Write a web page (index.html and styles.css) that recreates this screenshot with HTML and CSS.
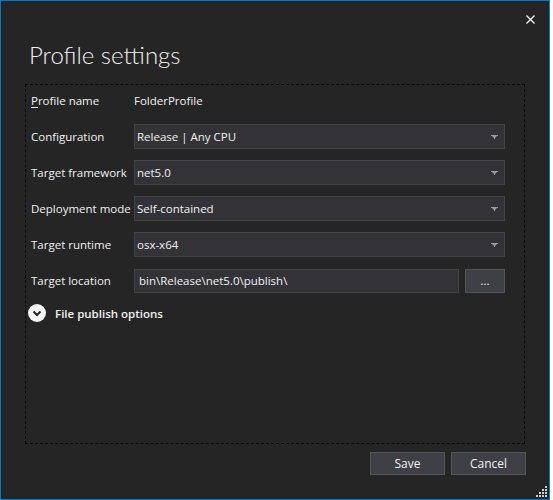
FILE: index.html
```html
<!DOCTYPE html>
<html lang="en">
<head>
  <meta charset="UTF-8" />
  <title>Profile settings</title>
  <link rel="stylesheet" href="styles.css">
</head>
<body>
  <div class="window">
    <div class="titlebar">
      <button class="close" aria-label="Close">
        <svg width="9" height="9" viewBox="0 0 9 9"><path d="M0.5 0.5L8.5 8.5M8.5 0.5L0.5 8.5" stroke="#f1f1f1" stroke-width="1.4"/></svg>
      </button>
    </div>

    <h1 class="title">Profile settings</h1>

    <div class="panel">
      <div class="form">
        <label><u>P</u>rofile name</label>
        <div class="value">FolderProfile</div>

        <label>Configuration</label>
        <div class="combo"><span>Release | Any CPU</span><svg class="arrow" width="7" height="4" viewBox="0 0 7 4"><path d="M0 0H7V1H6L4 3V4H3V3L1 1H0Z" fill="#9a9a9a"/></svg></div>

        <label>Target framework</label>
        <div class="combo"><span>net5.0</span><svg class="arrow" width="7" height="4" viewBox="0 0 7 4"><path d="M0 0H7V1H6L4 3V4H3V3L1 1H0Z" fill="#9a9a9a"/></svg></div>

        <label>Deployment mode</label>
        <div class="combo"><span>Self-contained</span><svg class="arrow" width="7" height="4" viewBox="0 0 7 4"><path d="M0 0H7V1H6L4 3V4H3V3L1 1H0Z" fill="#9a9a9a"/></svg></div>

        <label>Target runtime</label>
        <div class="combo"><span>osx-x64</span><svg class="arrow" width="7" height="4" viewBox="0 0 7 4"><path d="M0 0H7V1H6L4 3V4H3V3L1 1H0Z" fill="#9a9a9a"/></svg></div>

        <label>Target location</label>
        <div class="path-row">
          <div class="textbox">bin\Release\net5.0\publish\</div>
          <button class="btn browse">...</button>
        </div>
      </div>

      <div class="expander">
        <svg width="18" height="18" viewBox="0 0 18 18"><circle cx="9" cy="9" r="9" fill="#f5f5f5"/><path d="M5.5 7.5L9 11L12.5 7.5" stroke="#252526" stroke-width="2" fill="none"/></svg>
        <span>File publish options</span>
      </div>
    </div>

    <div class="actions">
      <button class="btn">Save</button>
      <button class="btn">Cancel</button>
    </div>

    <!-- resize grip -->
    <svg class="grip" width="12" height="12" viewBox="0 0 12 12" fill="#d0d0d0">
      <rect x="9" y="0" width="2" height="2"/>
      <rect x="6" y="3" width="2" height="2"/><rect x="9" y="3" width="2" height="2"/>
      <rect x="3" y="6" width="2" height="2"/><rect x="6" y="6" width="2" height="2"/><rect x="9" y="6" width="2" height="2"/>
      <rect x="0" y="9" width="2" height="2"/><rect x="3" y="9" width="2" height="2"/><rect x="6" y="9" width="2" height="2"/><rect x="9" y="9" width="2" height="2"/>
    </svg>
  </div>
</body>
</html>
```

FILE: styles.css
```css
body {
  margin: 0;
  background: #fff;
  font-family: 'Open Sans', 'Noto Sans', sans-serif;
  font-size: 11.5px;
  color: #f1f1f1;
}

.window {
  position: relative;
  width: 550px;
  height: 500px;
  box-sizing: border-box;
  border: 1px solid #007acc;
  background: #252526;
}

.titlebar {
  display: flex;
  justify-content: flex-end;
  height: 38px;
}
.close {
  width: 9px;
  height: 9px;
  padding: 0;
  margin: 14px 14px 0 0;
  border: none;
  background: none;
  display: flex;
}

.title {
  margin: 0 0 13px 28px;
  font-family: Lato, 'Open Sans', sans-serif;
  font-size: 24px;
  line-height: 32px;
  font-weight: 300;
  color: #f1f1f1;
}

.panel {
  margin-left: 24px;
  width: 500px;
  height: 360px;
  box-sizing: border-box;
  border: 1px dashed #0a0a0a;
  padding: 3px 19px 0 5px;
}

.form {
  display: grid;
  grid-template-columns: 103px 1fr;
  grid-auto-rows: 25px;
  row-gap: 11px;
  align-items: center;
}
.form label {
  white-space: nowrap;
}
.form label u {
  text-underline-offset: 2px;
}

.combo, .textbox {
  height: 25px;
  box-sizing: border-box;
  border: 1px solid #434346;
  background: #333337;
  display: flex;
  align-items: center;
  padding: 0 6px 0 2px;
}
.combo span {
  flex: 1;
}
.textbox {
  flex: 1;
  height: 24px;
  padding-left: 4px;
}

.path-row {
  display: flex;
  gap: 6px;
}

.btn {
  font: inherit;
  color: #f1f1f1;
  background: #3f3f46;
  border: 1px solid #555558;
  height: 24px;
  padding: 0;
}
.browse {
  width: 40px;
  line-height: 14px;
}

.expander {
  display: flex;
  align-items: center;
  gap: 9px;
  margin: 11px 0 0 -3px;
  font-weight: 600;
}
.expander svg {
  display: block;
}

.actions {
  display: flex;
  justify-content: flex-end;
  gap: 6px;
  margin: 8px 23px 0 0;
}
.actions .btn {
  width: 75px;
  height: 23px;
  font-size: 12px;
}

.grip {
  position: absolute;
  right: 1px;
  bottom: 1px;
}
```
